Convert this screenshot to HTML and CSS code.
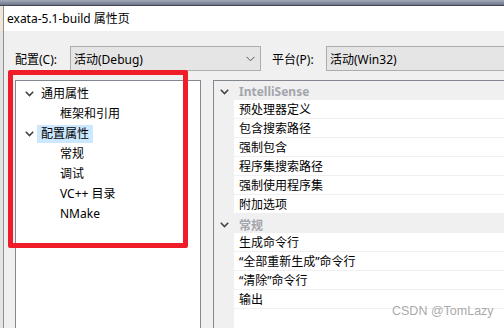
FILE: index.html
```html
<!DOCTYPE html>
<html lang="zh-CN">
<head>
    <meta charset="UTF-8">
    <meta name="viewport" content="width=device-width, initial-scale=1.0">
    <title>exata-5.1-build 属性页</title>
    <link rel="stylesheet" href="styles.css">
</head>
<body>
    <div class="screen">
        <div class="top-edge"></div>
        <div class="frame">
            <div class="behind"></div>
            <div class="dialog">
                <div class="title">exata-5.1-build 属性页</div>
                <div class="content">
                    <div class="config-row">
                        <span class="label">配置(C):</span>
                        <div class="combo combo-config">
                            <span>活动(Debug)</span>
                            <svg class="combo-arrow" width="9" height="6" viewBox="0 0 9 6">
                                <polyline points="0.5,0.8 4.5,4.8 8.5,0.8" fill="none" stroke="#555" stroke-width="1"/>
                            </svg>
                        </div>
                        <span class="label label-platform">平台(P):</span>
                        <div class="combo combo-platform">
                            <span>活动(Win32)</span>
                        </div>
                    </div>
                    <div class="panes">
                        <div class="tree">
                            <div class="tree-row">
                                <svg class="chev" width="9" height="6" viewBox="0 0 9 6">
                                    <polyline points="0.8,0.8 4.5,4.5 8.2,0.8" fill="none" stroke="#444" stroke-width="1.6"/>
                                </svg>
                                <span class="tree-label">通用属性</span>
                            </div>
                            <div class="tree-row child"><span class="tree-label">框架和引用</span></div>
                            <div class="tree-row">
                                <svg class="chev" width="9" height="6" viewBox="0 0 9 6">
                                    <polyline points="0.8,0.8 4.5,4.5 8.2,0.8" fill="none" stroke="#444" stroke-width="1.6"/>
                                </svg>
                                <span class="tree-label selected">配置属性</span>
                            </div>
                            <div class="tree-row child"><span class="tree-label">常规</span></div>
                            <div class="tree-row child"><span class="tree-label">调试</span></div>
                            <div class="tree-row child"><span class="tree-label">VC++ 目录</span></div>
                            <div class="tree-row child"><span class="tree-label">NMake</span></div>
                        </div>
                        <div class="grid">
                            <div class="category">
                                <span class="cat-toggle">
                                    <svg width="9" height="6" viewBox="0 0 9 6">
                                        <polyline points="0.8,0.8 4.5,4.5 8.2,0.8" fill="none" stroke="#444" stroke-width="1.6"/>
                                    </svg>
                                </span>
                                <span class="cat-name">IntelliSense</span>
                            </div>
                            <div class="prop">预处理器定义</div>
                            <div class="prop">包含搜索路径</div>
                            <div class="prop">强制包含</div>
                            <div class="prop">程序集搜索路径</div>
                            <div class="prop">强制使用程序集</div>
                            <div class="prop">附加选项</div>
                            <div class="category">
                                <span class="cat-toggle">
                                    <svg width="9" height="6" viewBox="0 0 9 6">
                                        <polyline points="0.8,0.8 4.5,4.5 8.2,0.8" fill="none" stroke="#444" stroke-width="1.6"/>
                                    </svg>
                                </span>
                                <span class="cat-name">常规</span>
                            </div>
                            <div class="prop">生成命令行</div>
                            <div class="prop">“全部重新生成”命令行</div>
                            <div class="prop">“清除”命令行</div>
                            <div class="prop">输出</div>
                        </div>
                    </div>
                </div>
            </div>
        </div>
        <!-- 红框标注 -->
        <div class="annotation"></div>
        <div class="watermark">CSDN @TomLazy</div>
    </div>
</body>
</html>
```

FILE: styles.css
```css
body {
    margin: 0;
    font-family: "Noto Sans", "Noto Sans CJK SC", sans-serif;
    font-size: 12px;
    color: #000;
}
.screen {
    width: 504px;
    height: 328px;
    overflow: hidden;
    position: relative;
    display: flex;
    flex-direction: column;
    background-color: #f0f0f0;
}
.top-edge {
    height: 5px;
    flex-shrink: 0;
    background: linear-gradient(#a3abbb, #6d7586);
    border-bottom: 1px solid #414754;
}
.frame {
    flex: 1;
    display: flex;
    flex-direction: row;
    min-height: 0;
}
.behind {
    width: 3px;
    flex-shrink: 0;
    background: linear-gradient(#efe8d8 0 25px, #e4e4e4 25px);
}
.dialog {
    flex: 1;
    display: flex;
    flex-direction: column;
    border-left: 1px solid #8f8f8f;
    min-width: 0;
}
.title {
    height: 25px;
    flex-shrink: 0;
    background-color: #fff;
    padding-left: 3px;
    line-height: 25px;
    white-space: nowrap;
}
.content {
    flex: 1;
    background-color: #f0f0f0;
    padding: 15px 0 0 11px;
    min-height: 0;
}
.config-row {
    display: flex;
    align-items: center;
    height: 25px;
}
.label {
    width: 55px;
    flex-shrink: 0;
    white-space: nowrap;
}
.label-platform {
    width: 54px;
    margin-left: 11px;
}
.combo {
    box-sizing: border-box;
    height: 25px;
    display: flex;
    align-items: center;
    padding-left: 3px;
    border: 1px solid #adadad;
    background-color: #e5e5e5;
    white-space: nowrap;
    flex-shrink: 0;
}
.combo-config {
    width: 191px;
}
.combo-platform {
    width: 200px;
}
.combo-arrow {
    margin-left: auto;
    margin-right: 5px;
}
.panes {
    display: flex;
    gap: 12px;
    margin-top: 9px;
    height: 260px;
}
.tree {
    width: 186px;
    flex-shrink: 0;
    box-sizing: border-box;
    border: 1px solid #828790;
    background-color: #fff;
    padding-top: 3px;
}
.tree-row {
    display: flex;
    align-items: center;
    height: 20px;
    padding-left: 9px;
}
.tree-row.child {
    padding-left: 44px;
}
.chev {
    margin-right: 7px;
}
.tree-label {
    line-height: 18px;
    white-space: nowrap;
}
.tree-label.selected {
    background-color: #cce8ff;
    padding: 0 4px;
    margin-left: -4px;
}
.grid {
    flex: 1;
    border-left: 1px solid #828790;
    border-top: 1px solid #828790;
    background: linear-gradient(to right, #f0f0f0 20px, #fff 20px);
    min-width: 0;
}
.category {
    display: flex;
    align-items: center;
    box-sizing: border-box;
    height: 19px;
    padding-top: 2px;
    background-color: #f0f0f0;
}
.cat-toggle {
    width: 20px;
    display: flex;
    justify-content: center;
    flex-shrink: 0;
}
.cat-name {
    padding-left: 5px;
    font-weight: bold;
    color: #a3a5ad;
}
.prop {
    box-sizing: border-box;
    height: 19px;
    line-height: 20px;
    margin-left: 20px;
    padding-left: 5px;
    background-color: #fff;
    border-bottom: 1px solid #f0f0f0;
    white-space: nowrap;
}
.annotation {
    position: absolute;
    left: 8px;
    top: 70px;
    width: 180px;
    height: 178px;
    box-sizing: border-box;
    border: 5px solid #ee1d27;
    border-radius: 2px;
}
.watermark {
    position: absolute;
    left: 392px;
    top: 304px;
    font-family: "Liberation Sans", sans-serif;
    font-size: 12.5px;
    color: rgba(140, 140, 140, 0.75);
}
```
